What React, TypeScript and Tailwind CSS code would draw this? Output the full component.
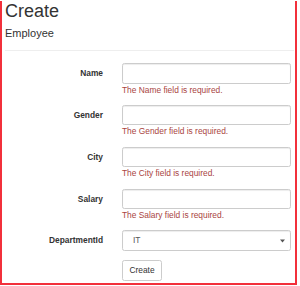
import React from "react";

const fields = ["Name", "Gender", "City", "Salary"];

const FieldRow: React.FC<{ label: string }> = ({ label }) => {
  return (
    <div className="flex mb-[9.4px]">
      <label className="w-[101px] h-[20px] leading-[20px] text-right font-bold text-[8.4px] text-[#333]">
        {label}
      </label>
      <div className="ml-[19px] w-[169px] flex flex-col">
        <input
          type="text"
          className="h-[20.4px] w-full rounded-[2.4px] border border-[#ccc] bg-white shadow-[inset_0_1px_1px_rgba(0,0,0,0.075)] outline-none"
        />
        <span className="text-[8.4px] leading-[12px] text-[#a94442]">
          The {label} field is required.
        </span>
      </div>
    </div>
  );
};

export default function App() {
  return (
    <div className="w-[300px] h-[286px] bg-white font-['Liberation_Sans',Arial,sans-serif]">
      <div className="w-[297px] h-[284px] border-x-2 border-b-2 border-[#f2303b] pl-[3px] pr-[1px] text-[#333]">
        <h2 className="mt-[1px] text-[18px] leading-[20px]">Create</h2>
        <h4 className="mt-[6px] text-[11px] leading-[12px]">Employee</h4>
        <hr className="mt-[11px] border-t border-[#eee]" />
        <form className="mt-[12.3px] ml-[-3px]">
          {fields.map((f) => (
            <FieldRow key={f} label={f} />
          ))}
          <div className="flex mb-[9.3px]">
            <label className="w-[101px] h-[20px] leading-[20px] text-right font-bold text-[8.4px] text-[#333]">
              DepartmentId
            </label>
            <div className="ml-[19px] w-[169px] h-[20.4px] rounded-[2.4px] border border-[#ccc] bg-white flex items-center justify-between pl-[10px] pr-[5px] shadow-[inset_0_1px_1px_rgba(0,0,0,0.075)]">
              <span className="text-[8.4px] text-[#555]">IT</span>
              <svg width="5" height="4" viewBox="0 0 5 4">
                <path d="M0 0.5 L5 0.5 L2.5 3.5 Z" fill="#555" />
              </svg>
            </div>
          </div>
          <div className="flex">
            <div className="w-[101px]" />
            <button
              type="button"
              className="ml-[19px] w-[40px] h-[20.4px] rounded-[2.4px] border border-[#ccc] bg-white text-[8.4px] text-[#333]"
            >
              Create
            </button>
          </div>
        </form>
      </div>
    </div>
  );
}
